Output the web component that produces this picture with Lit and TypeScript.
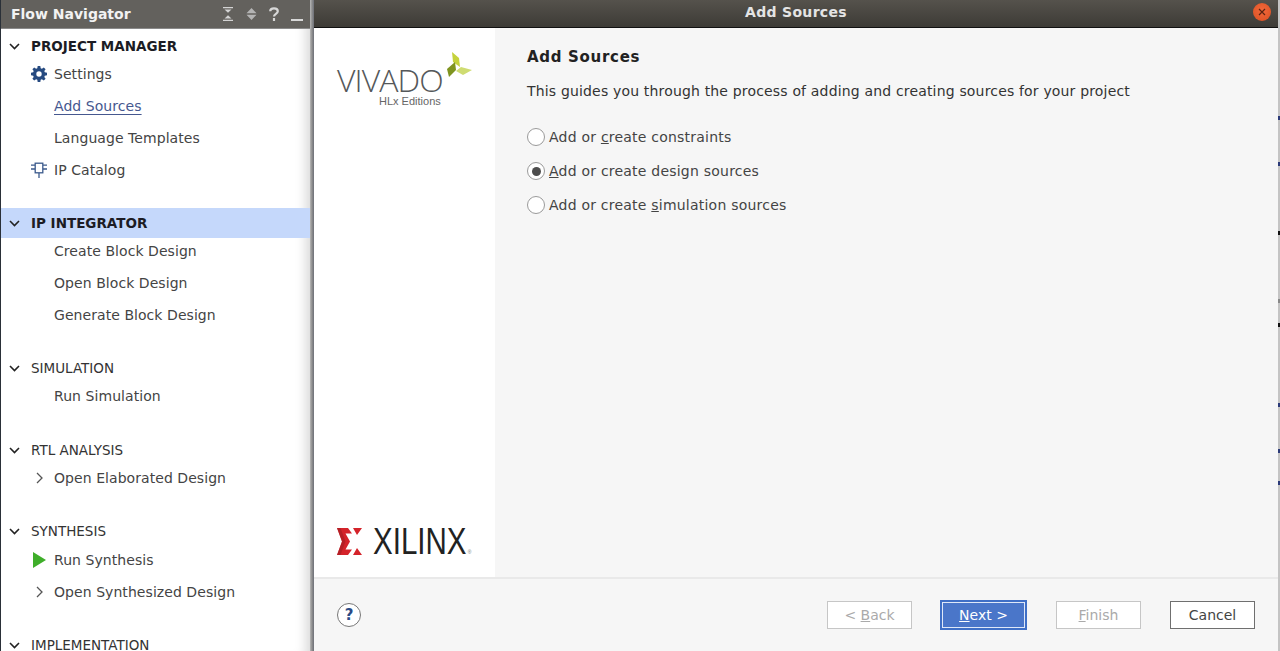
import { LitElement, html, css, svg } from "lit";
import { customElement } from "lit/decorators.js";

type Item = { label: unknown; icon?: string; cls?: string };
type Section = { title: string; bold?: boolean; selected?: boolean; cls?: string; items: Item[] };

const sections: Section[] = [
  { title: "PROJECT MANAGER", bold: true, items: [
    { label: "Settings", icon: "gear" },
    { label: "Add Sources", cls: "link" },
    { label: "Language Templates" },
    { label: "IP Catalog", icon: "ip" },
  ]},
  { title: "IP INTEGRATOR", bold: true, selected: true, items: [
    { label: "Create Block Design" },
    { label: "Open Block Design" },
    { label: "Generate Block Design" },
  ]},
  { title: "SIMULATION", items: [{ label: "Run Simulation" }] },
  { title: "RTL ANALYSIS", cls: "rtl", items: [{ label: "Open Elaborated Design", icon: "chev" }] },
  { title: "SYNTHESIS", cls: "syn", items: [
    { label: "Run Synthesis", icon: "play" },
    { label: "Open Synthesized Design", icon: "chev" },
  ]},
  { title: "IMPLEMENTATION", items: [] },
];

const marks: [number, string][] = [
  [116, "#2b3a78"], [162, "#2b3a78"], [231, "#111"], [299, "#888"],
  [323, "#111"], [403, "#2b3a78"], [449, "#2b3a78"], [481, "#2b3a78"],
];

const icons: Record<string, unknown> = {
  gear: svg`<svg width="16" height="16" viewBox="0 0 16 16"><path fill="#264a80" fill-rule="evenodd" d="M6.7 0h2.6l.4 2.2 1.2.5L12.8 1.4l1.8 1.8-1.3 1.9.5 1.2 2.2.4v2.6l-2.2.4-.5 1.2 1.3 1.9-1.8 1.8-1.9-1.3-1.2.5-.4 2.2H6.7l-.4-2.2-1.2-.5-1.9 1.3-1.8-1.8 1.3-1.9-.5-1.2L0 9.3V6.7l2.2-.4.5-1.2-1.3-1.9 1.8-1.8 1.9 1.3 1.2-.5zM8 5.3a2.7 2.7 0 1 0 0 5.4 2.7 2.7 0 0 0 0-5.4z"/></svg>`,
  ip: svg`<svg width="16" height="16" viewBox="0 0 16 16" fill="none" stroke="#3b5a8c" stroke-width="1.3"><rect x="4.2" y="1.2" width="7.6" height="9.6" fill="#fff"/><path d="M8 11v5M0 3.2h4M0 7h4M12 3.2h4M12 7h4"/></svg>`,
  play: svg`<svg width="13" height="16" viewBox="0 0 13 16"><path fill="#3fae2a" d="M0 0l13 8-13 8z"/></svg>`,
  chev: svg`<svg width="7" height="12" viewBox="0 0 7 12" fill="none" stroke="#555" stroke-width="1.3"><path d="M1 1l5 5-5 5"/></svg>`,
};

@customElement("app-root")
export class AppRoot extends LitElement {
  static styles = css`
    :host { display: block; width: 1280px; height: 651px; overflow: hidden; background: #c4c4c4; font-family: "DejaVu Sans", sans-serif; color: #333; position: relative; }
    .page { display: flex; height: 651px; }
    .nav { width: 310px; flex: none; background: #fff; border-left: 1px solid #2a3038; box-sizing: border-box; display: flex; flex-direction: column; overflow: hidden; box-shadow: inset -14px 0 12px -10px #d8d8d8; }
    .nav-head { height: 29px; flex: none; background: #63615d; display: flex; align-items: center; justify-content: space-between; padding: 0 7px 0 10px; border-bottom: 1px solid #8a8a8a; box-sizing: border-box; }
    .nav-title { color: #f2f2f2; font-weight: 700; font-size: 14px; }
    .nav-tools { display: flex; align-items: center; gap: 12px; }
    .nav-body { padding-top: 2px; flex: 1; }
    .section { margin-bottom: 22px; }
    .section.rtl { margin-top: 23px; }
    .sec-head { height: 30px; margin-bottom: -3px; display: flex; align-items: center; padding-left: 8px; font-size: 13.5px; color: #333; position: relative; }
    .section.syn .sec-head { margin-bottom: -2px; }
    .sec-head.bold { font-weight: 700; font-size: 13.5px; color: #1c1c24; }
    .sec-head.sel { background: #c5d8fb; }
    .sec-head svg { flex: none; margin-right: 11px; }
    .item { height: 32px; display: flex; align-items: center; font-size: 14px; letter-spacing: 0.06px; color: #444; padding-left: 53px; position: relative; }
    .item .ic { position: absolute; left: 30px; top: 0; width: 16px; height: 32px; display: flex; align-items: center; justify-content: center; }
    .link { color: #46588f; text-decoration: underline; text-underline-offset: 3px; }
    .divider { width: 4px; flex: none; background: linear-gradient(90deg, #b8b8b8, #8e8e8e, #6d7078); }
    .dialog { flex: 1; display: flex; flex-direction: column; background: #f6f6f6; min-width: 0; }
    .titlebar { height: 28px; flex: none; box-sizing: border-box; background: linear-gradient(#55524c, #3d3b36); border-bottom: 1px solid #111; display: flex; align-items: center; justify-content: center; position: relative; color: #e4e4e4; font-weight: 700; font-size: 14px; letter-spacing: 0.3px; padding-bottom: 3px; }
    .close { position: absolute; right: 7px; top: 3px; width: 18px; height: 18px; border-radius: 50%; background: radial-gradient(circle at 50% 40%, #f2683a, #d94f22); display: flex; align-items: center; justify-content: center; }
    .main { flex: 1; display: flex; border-bottom: 2px solid #e9e9e9; min-height: 0; }
    .side { width: 181px; flex: none; background: #fff; display: flex; flex-direction: column; justify-content: space-between; box-sizing: border-box; padding: 24px 0 21px 23px; }
    .vivado { position: relative; width: 140px; height: 60px; }
    .vivado-word { position: absolute; left: 0; top: 15px; font-family: "Open Sans", sans-serif; font-weight: 300; font-size: 32px; letter-spacing: -0.9px; color: #55585a; line-height: 26px; }
    .vivado-sub { position: absolute; left: 42px; top: 43px; font-family: "Liberation Sans", sans-serif; font-size: 11px; color: #666; line-height: 12px; }
    .leaf { position: absolute; left: 110px; top: 0; }
    .xilinx { display: flex; align-items: center; gap: 11px; height: 30px; }
    .xilinx-word { display: inline-block; font-family: "Liberation Sans", sans-serif; font-size: 36px; color: #222; line-height: 30px; position: relative; margin-top: 2px; transform: scaleX(0.82); transform-origin: left center; white-space: nowrap; }
    .reg { font-size: 6px; letter-spacing: 0; color: #777; position: absolute; right: -6px; bottom: 1px; line-height: 8px; }
    .content { flex: 1; padding: 20px 0 0 32px; }
    h2 { margin: 0; font-size: 15px; font-weight: 700; color: #222; line-height: 18px; letter-spacing: 0.7px; }
    .desc { margin-top: 16px; font-size: 14px; color: #333; line-height: 18px; letter-spacing: 0.17px; }
    .radios { margin-top: 20px; display: flex; flex-direction: column; }
    .radio { height: 34px; display: flex; align-items: center; gap: 4px; font-size: 14px; letter-spacing: 0.22px; color: #444; }
    .dot { width: 18px; height: 18px; box-sizing: border-box; border: 1.5px solid #9a9a9a; border-radius: 50%; background: #fff; display: flex; align-items: center; justify-content: center; flex: none; }
    .dot.on::after { content: ""; width: 9px; height: 9px; border-radius: 50%; background: #4d4d4d; }
    .footer { height: 72px; flex: none; display: flex; align-items: center; padding: 0 23px 0 23px; box-sizing: border-box; }
    .help { width: 24px; height: 24px; box-sizing: border-box; border: 1.5px solid #777; border-radius: 50%; background: #fff; color: #2a4a86; font-weight: 700; font-size: 15px; display: flex; align-items: center; justify-content: center; margin-right: auto; }
    .btn { width: 85px; height: 28px; box-sizing: border-box; border: 1px solid #c6c6c6; background: #fff; color: #aaa; font-size: 14px; display: flex; align-items: center; justify-content: center; margin-left: 29px; white-space: pre; }
    .btn.next { width: 87px; height: 30px; margin-left: 28px; background: #4a76c9; color: #fff; border: 2px solid #3f6fc6; box-shadow: inset 0 0 0 1px #dfe8f8; }
    .btn.cancel { border-color: #6f6f6f; color: #444; }
    .strip { width: 2px; flex: none; background: #c4c4c4; position: relative; }
    .mark { position: absolute; left: 0; width: 2px; height: 4px; }
  `;

  private chevDown() {
    return svg`<svg width="11" height="7" viewBox="0 0 11 7" fill="none" stroke="#222" stroke-width="1.6"><path d="M1 1l4.500 4.500L10 1"/></svg>`;
  }

  render() {
    return html`
      <div class="page">
        <div class="nav">
          <div class="nav-head">
            <span class="nav-title">Flow Navigator</span>
            <span class="nav-tools">
              <svg width="12" height="14" viewBox="0 0 12 14" fill="#d4d4d4"><path d="M1 0h10v1.200H1zM2.500 2.400h7L6 5.800zM6 8.200l3.500 3.400h-7zM1 12.800h10V14H1z"/></svg>
              <svg width="11" height="12" viewBox="0 0 11 12" fill="#b4b4b4"><path d="M5.500 0L10.500 5.200H.5zM5.500 12L.5 6.800h10z"/></svg>
              <svg width="10" height="14" viewBox="0 0 10 14" fill="none" stroke="#d8d8d8" stroke-width="2.200"><path d="M1.200 4.200C1.200.4 8.800.4 8.800 4.200c0 2.600-3.800 2.600-3.800 5.300"/><path d="M5 11v3"/></svg>
              <svg width="12" height="13" viewBox="0 0 12 13" fill="#d8d8d8"><path d="M0 11h12v2H0z"/></svg>
            </span>
          </div>
          <div class="nav-body">
            ${sections.map((s) => html`
              <div class="section ${s.cls ?? ""}">
                <div class="sec-head ${s.bold ? "bold" : ""} ${s.selected ? "sel" : ""}">${this.chevDown()}${s.title}</div>
                ${s.items.map((it) => html`
                  <div class="item">
                    ${it.icon ? html`<span class="ic ${it.icon}">${icons[it.icon]}</span>` : ""}
                    <span class="${it.cls ?? ""}">${it.label}</span>
                  </div>`)}
              </div>`)}
          </div>
        </div>
        <div class="divider"></div>
        <div class="dialog">
          <div class="titlebar">Add Sources
            <span class="close"><svg width="8" height="8" viewBox="0 0 8 8" stroke="#5a2412" stroke-width="1.200"><path d="M1 1l6 6M7 1L1 7"/></svg></span>
          </div>
          <div class="main">
            <div class="side">
              <div class="vivado">
                <span class="vivado-word">VIVADO</span>
                <svg class="leaf" width="26" height="26" viewBox="0 0 26 26">
                  <path fill="#c5d23c" d="M5 0l7 6 1 9-7-5z"/>
                  <path fill="#7f9420" d="M0 17l8-7 1 8-7 7z"/>
                  <path fill="#cfdc72" d="M9 19l5-4 11 3-9 5z"/>
                </svg>
                <span class="vivado-sub">HLx Editions</span>
              </div>
              <div class="xilinx">
                <svg width="25" height="27" viewBox="0 0 25 27">
                  <path fill="#d4232a" d="M0 0H11L15 5.500H8.500L13 13.500 8.500 21.500H15L11 27H0L5 13.500z"/>
                  <path fill="#a81e24" d="M0 0L5 13.500 0 27 3.500 27 8.500 13.500 3.500 0z" opacity=".7"/>
                  <path fill="#d4232a" d="M16 0H25L20 7zM16 27H25L20 20z"/>
                </svg>
                <span class="xilinx-word">XILINX<span class="reg">®</span></span>
              </div>
            </div>
            <div class="content">
              <h2>Add Sources</h2>
              <div class="desc">This guides you through the process of adding and creating sources for your project</div>
              <div class="radios">
                <div class="radio"><span class="dot"></span><span>Add or <u>c</u>reate constraints</span></div>
                <div class="radio"><span class="dot on"></span><span><u>A</u>dd or create design sources</span></div>
                <div class="radio"><span class="dot"></span><span>Add or create <u>s</u>imulation sources</span></div>
              </div>
            </div>
          </div>
          <div class="footer">
            <span class="help">?</span>
            <span class="btn"><span>&lt; <u>B</u>ack</span></span>
            <span class="btn next"><span><u>N</u>ext &gt;</span></span>
            <span class="btn"><span><u>F</u>inish</span></span>
            <span class="btn cancel">Cancel</span>
          </div>
        </div>
        <div class="strip">
          ${marks.map(([y, c]) => html`<span class="mark" style="top:${y}px;background:${c}"></span>`)}
        </div>
      </div>
    `;
  }
}
